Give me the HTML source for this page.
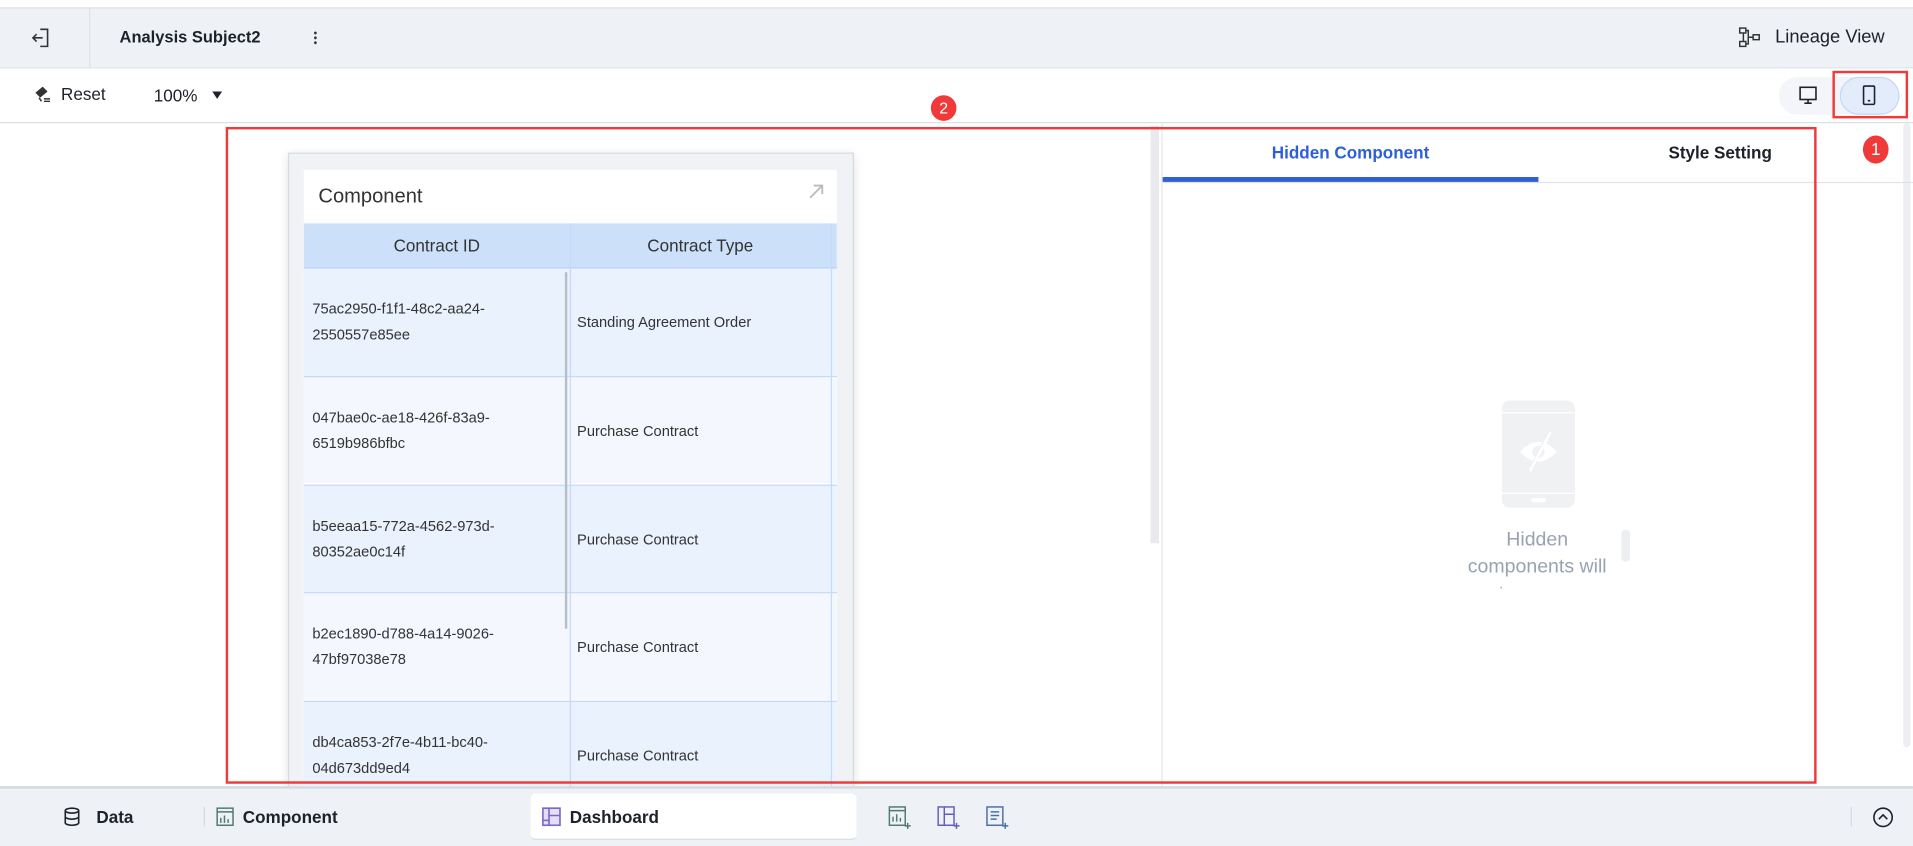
<!DOCTYPE html>
<html><head><meta charset="utf-8"><style>
*{box-sizing:border-box;margin:0;padding:0}
html,body{width:1913px;height:846px;overflow:hidden;background:#fff;font-family:"Liberation Sans",Arial,sans-serif}
#w{position:absolute;left:0;top:0;width:1568px;height:693px;transform:scale(1.22,1.2208);transform-origin:0 0}
.a{position:absolute}
.row{position:absolute;left:0;width:437px;height:88px;border-top:1px solid #c4daf8}
.row .c1{position:absolute;left:7px;top:0;height:88px;width:205px;display:flex;align-items:center;font-size:12px;line-height:21px;color:#333}
.row .c2{position:absolute;left:224px;top:0;height:88px;display:flex;align-items:center;font-size:12px;color:#333}
</style></head><body><div id="w">
<div class="a" style="left:0;top:6px;width:1568px;height:1px;background:#dcdfe4"></div>
<div class="a" style="left:0;top:7px;width:1568px;height:49px;background:#eef1f6;border-bottom:1px solid #e2e5ea"></div>
<div class="a" style="left:73px;top:7px;width:1px;height:49px;background:#e0e3e8"></div>
<svg class="a" style="left:26px;top:22px" width="16" height="18" viewBox="0 0 16 18" fill="none" stroke="#333" stroke-width="1.3"><path d="M7 2h6v14H7M1 9h8M4 6L1 9l3 3"/></svg>
<div class="a" style="left:98px;top:23px;font-size:13.5px;font-weight:bold;color:#1d2129">Analysis Subject2</div>
<div class="a" style="left:257px;top:25px;width:3px;height:12px;background:radial-gradient(circle,#333 1px,transparent 1.3px) 0 0/3px 4px"></div>
<svg class="a" style="left:1425px;top:22px" width="20" height="17" viewBox="0 0 20 17" fill="none" stroke="#333" stroke-width="1.2"><rect x="1" y="1" width="5" height="4"/><rect x="1" y="12" width="5" height="4"/><rect x="12" y="6.5" width="5" height="4"/><path d="M4 5v7M6 3h2v11H6M8 8.5h4"/></svg>
<div class="a" style="left:1455px;top:22px;font-size:15px;color:#1d2129">Lineage View</div>
<div class="a" style="left:0;top:100px;width:1568px;height:1px;background:#dcdfe4"></div>
<svg class="a" style="left:27px;top:70px" width="16" height="15" viewBox="0 0 16 15"><path d="M2 6l6-5 4 4-6 5z" fill="#333"/><path d="M5 10l2 3M9 11h5M9 13h5" stroke="#333" stroke-width="1.2"/></svg>
<div class="a" style="left:50px;top:69px;font-size:14px;color:#1d2129">Reset</div>
<div class="a" style="left:126px;top:70px;font-size:14px;color:#1d2129">100%</div>
<div class="a" style="left:174px;top:75px;border-left:4.5px solid transparent;border-right:4.5px solid transparent;border-top:6px solid #1d2129"></div>
<div class="a" style="left:1458px;top:63px;width:99px;height:31px;background:#f3f5f9;border-radius:16px"></div>
<div class="a" style="left:1508px;top:63px;width:49px;height:31px;background:#e3ecfb;border:1px solid #c5d8f6;border-radius:16px"></div>
<svg class="a" style="left:1474px;top:70px" width="16" height="16" viewBox="0 0 16 16" fill="none" stroke="#1d2129" stroke-width="1.3"><rect x="1.5" y="1.5" width="13" height="10"/><path d="M8 11.5v3M5 14.5h6"/></svg>
<svg class="a" style="left:1526px;top:69px" width="12" height="18" viewBox="0 0 12 18" fill="none" stroke="#1d2129" stroke-width="1.3"><rect x="1.5" y="1.5" width="9" height="15" rx="1"/><path d="M5 13.5h2"/></svg>
<div class="a" style="left:1502px;top:58px;width:62px;height:39px;border:2px solid #f03a3a"></div>
<div class="a" style="left:943px;top:103px;width:7px;height:342px;background:#e8eaee"></div>
<div class="a" style="left:952px;top:101px;width:1px;height:544px;background:#e3e5e9"></div>
<div class="a" style="left:1560px;top:101px;width:6px;height:511px;background:#eceef1;border-radius:3px"></div>
<div class="a" style="left:236px;top:125px;width:464px;height:530px;background:#f0f2f5;border:1px solid #d7dbe1;box-shadow:0 2px 8px rgba(0,0,0,.12)"></div>
<div class="a" style="left:249px;top:139px;width:437px;height:510px;background:#fff;overflow:hidden">
 <div class="a" style="left:12px;top:13px;font-size:16.5px;color:#333">Component</div>
 <svg class="a" style="left:413px;top:11px" width="14" height="14" viewBox="0 0 14 14" fill="none" stroke="#bbb" stroke-width="1.5"><path d="M2 12L12 2M5 2h7v7"/></svg>
 <div class="a" style="left:0;top:44px;width:437px;height:37px;background:#cce0fa;border-bottom:1px solid #b7d1f5"></div>
 <div class="a" style="left:0;top:44px;width:218px;height:37px;line-height:37px;text-align:center;font-size:14px;color:#333">Contract ID</div>
 <div class="a" style="left:218px;top:44px;width:214px;height:37px;line-height:37px;text-align:center;font-size:14px;color:#333">Contract Type</div>
 <div class="row" style="top:81px;background:#eaf2fe;border-top:none"><div class="c1">75ac2950-f1f1-48c2-aa24-<br>2550557e85ee</div><div class="c2">Standing Agreement Order</div></div>
 <div class="row" style="top:169px;background:#f4f8fe"><div class="c1">047bae0c-ae18-426f-83a9-<br>6519b986bfbc</div><div class="c2">Purchase Contract</div></div>
 <div class="row" style="top:258px;background:#eaf2fe"><div class="c1">b5eeaa15-772a-4562-973d-<br>80352ae0c14f</div><div class="c2">Purchase Contract</div></div>
 <div class="row" style="top:346px;background:#f4f8fe"><div class="c1">b2ec1890-d788-4a14-9026-<br>47bf97038e78</div><div class="c2">Purchase Contract</div></div>
 <div class="row" style="top:435px;background:#eaf2fe"><div class="c1">db4ca853-2f7e-4b11-bc40-<br>04d673dd9ed4</div><div class="c2">Purchase Contract</div></div>
 <div class="a" style="left:214px;top:84px;width:2px;height:292px;background:#b8bec8"></div>
 <div class="a" style="left:218px;top:44px;width:1px;height:470px;background:#c4daf8"></div>
 <div class="a" style="left:432px;top:44px;width:1px;height:470px;background:#c4daf8"></div>
</div>
<div class="a" style="left:953px;top:117px;width:308px;text-align:center;font-size:14px;font-weight:bold;color:#2d5fd9">Hidden Component</div>
<div class="a" style="left:1260px;top:117px;width:300px;text-align:center;font-size:14px;font-weight:bold;color:#1d2129">Style Setting</div>
<div class="a" style="left:953px;top:149px;width:615px;height:1px;background:#dfe2e6"></div>
<div class="a" style="left:953px;top:145px;width:308px;height:4px;background:#2d5fd9"></div>
<svg class="a" style="left:1231px;top:328px" width="60" height="88" viewBox="0 0 60 88"><rect x="0" y="0" width="60" height="88" rx="7" fill="#f0f1f3"/><path d="M0 10h60M0 76h60" stroke="#fff" stroke-width="1"/><rect x="24" y="80" width="12" height="3.5" rx="1.7" fill="#fff"/><path d="M15 42q15-16 30 0q-15 16-30 0z" fill="#fff"/><circle cx="30" cy="42" r="5" fill="#f0f1f3"/><path d="M38 28L24 56" stroke="#f0f1f3" stroke-width="3"/><path d="M40 26L23 58" stroke="#fff" stroke-width="2"/></svg>
<div class="a" style="left:1160px;top:432px;width:200px;height:50px;overflow:hidden;text-align:center;font-size:16px;line-height:22px;color:#98a2b3">Hidden<br>components will<br>not appear on</div>
<div class="a" style="left:1329px;top:434px;width:7px;height:26px;background:#eceef1;border-radius:3px"></div>
<div class="a" style="left:185px;top:104px;width:1304px;height:538px;border:2px solid #f03a3a"></div>
<div class="a" style="left:763px;top:78px;width:21px;height:21px;border-radius:50%;background:#f03a3a;color:#fff;font-size:13px;line-height:21px;text-align:center">2</div>
<div class="a" style="left:1527px;top:111px;width:21px;height:23px;border-radius:50%;background:#f03a3a;color:#fff;font-size:14px;line-height:23px;text-align:center">1</div>
<div class="a" style="left:0;top:644px;width:1568px;height:49px;background:#eef1f6;border-top:2px solid #d5d9e0"></div>
<div class="a" style="left:435px;top:650px;width:267px;height:38px;background:#fff;border-radius:4px;border-bottom:1px solid #d5d9e0"></div>
<svg class="a" style="left:52px;top:661px" width="14" height="16" viewBox="0 0 14 16" fill="none" stroke="#1d2129" stroke-width="1.3"><ellipse cx="7" cy="3" rx="5.5" ry="2"/><path d="M1.5 3v10c0 1 2.5 2 5.5 2s5.5-1 5.5-2V3M1.5 8c0 1 2.5 2 5.5 2s5.5-1 5.5-2"/></svg>
<div class="a" style="left:79px;top:661px;font-size:14px;font-weight:bold;color:#1d2129">Data</div>
<div class="a" style="left:167px;top:661px;width:1px;height:16px;background:#d5d9e0"></div>
<svg class="a" style="left:177px;top:661px" width="15" height="16" viewBox="0 0 15 16" fill="none" stroke="#4f7a6e" stroke-width="1.2"><rect x="1" y="1" width="13" height="14"/><path d="M1 4h13M4 13V9M7 13V7M10 13v-3"/></svg>
<div class="a" style="left:199px;top:661px;font-size:14px;font-weight:bold;color:#1d2129">Component</div>
<svg class="a" style="left:444px;top:661px" width="16" height="16" viewBox="0 0 16 16" fill="none" stroke="#7a66c4" stroke-width="1.3"><rect x="1" y="1" width="14" height="14" fill="#e4defa"/><path d="M6 1v14M6 7h9M1 11h5"/></svg>
<div class="a" style="left:467px;top:661px;font-size:14px;font-weight:bold;color:#1d2129">Dashboard</div>
<svg class="a" style="left:728px;top:660px" width="20" height="20" viewBox="0 0 20 20" fill="none" stroke="#4f7a6e" stroke-width="1.2"><rect x="1" y="1" width="13" height="15"/><path d="M1 4h13M4 13V9M7 13V7M10 13v-3M16 14v5M13.5 16.5h5"/></svg>
<svg class="a" style="left:768px;top:660px" width="20" height="20" viewBox="0 0 20 20" fill="none" stroke="#6a5ab8" stroke-width="1.2"><rect x="1" y="1" width="13" height="15"/><path d="M6 1v15M6 7h8M16 14v5M13.5 16.5h5"/></svg>
<svg class="a" style="left:808px;top:660px" width="20" height="20" viewBox="0 0 20 20" fill="none" stroke="#4a6fa8" stroke-width="1.2"><rect x="1" y="1" width="13" height="15"/><path d="M4 5h7M4 8h7M4 11h5M16 14v5M13.5 16.5h5"/></svg>
<div class="a" style="left:1517px;top:661px;width:1px;height:16px;background:#d5d9e0"></div>
<svg class="a" style="left:1535px;top:661px" width="17" height="17" viewBox="0 0 17 17" fill="none" stroke="#1d2129" stroke-width="1.3"><circle cx="8.5" cy="8.5" r="7.5"/><path d="M5 10l3.5-3.5L12 10"/></svg>
</div></body></html>
